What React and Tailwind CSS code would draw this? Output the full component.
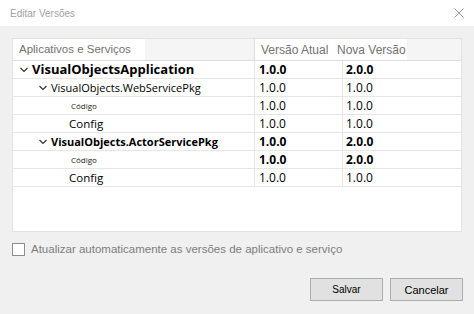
import React from "react";

const rows = [
  { label: "VisualObjectsApplication", indent: "pl-[7px]", chevron: true, size: "text-[13px] font-bold", cur: "1.0.0", next: "2.0.0", vbold: true },
  { label: "VisualObjects.WebServicePkg", indent: "pl-[26px]", chevron: true, size: "text-[11px]", cur: "1.0.0", next: "1.0.0", vbold: false },
  { label: "Código", indent: "pl-[58px]", size: "text-[8px] text-[#222]", cur: "1.0.0", next: "1.0.0", vbold: false },
  { label: "Config", indent: "pl-[56px]", size: "text-[11.5px]", cur: "1.0.0", next: "1.0.0", vbold: false },
  { label: "VisualObjects.ActorServicePkg", indent: "pl-[26px]", chevron: true, size: "text-[11px] font-bold", cur: "1.0.0", next: "2.0.0", vbold: true },
  { label: "Código", indent: "pl-[58px]", size: "text-[8px] text-[#222]", cur: "1.0.0", next: "2.0.0", vbold: true },
  { label: "Config", indent: "pl-[56px]", size: "text-[11.5px]", cur: "1.0.0", next: "1.0.0", vbold: false },
];

function Chevron() {
  return (
    <svg width="8" height="6" viewBox="0 0 8 6" className="mr-[4px] shrink-0">
      <polyline points="0.5,1 4,4.5 7.5,1" fill="none" stroke="#333" strokeWidth="1.2" />
    </svg>
  );
}

function App() {
  return (
    <div className="w-[474px] h-[314px] bg-[#f0f0f0] flex flex-col overflow-hidden font-['Open_Sans',_'Noto_Sans',sans-serif] text-[12px] text-black">
      <div className="h-[26px] bg-white flex items-center justify-between pl-[10px] pr-[10px] shrink-0">
        <span className="text-[10px] text-[#a3a3a3] font-['Liberation_Sans',_Arial,sans-serif]">Editar Versões</span>
        <svg width="10" height="10" viewBox="0 0 10 10">
          <path d="M0.5 0.5 L9.5 9.5 M9.5 0.5 L0.5 9.5" stroke="#8a8a8a" strokeWidth="0.9" />
        </svg>
      </div>

      <div className="px-[12px] pt-[12px]">
        <div className="h-[194px] bg-white border border-[#e2e2e2]">
          {/* header */}
          <div className="flex h-[22px] bg-[#f5f5f5] border-b border-[#dedede] font-['Liberation_Sans',_Arial,sans-serif] text-[12px] text-[#727272]">
            <div className="w-[241px] flex items-center text-[11.5px]">
              <span className="bg-white h-full flex items-center pl-[6px] pr-[14px]">Aplicativos e Serviços</span>
            </div>
            <div className="w-[88px] border-l border-[#dcdcdc] flex items-center bg-white pl-[6px]">
              <span>Versão Atual</span>
            </div>
            <div className="flex-1 border-l border-[#dcdcdc] flex items-center">
              <span className="bg-white h-full flex items-center ml-[-6px] pr-[1px] relative">Nova Versão</span>
            </div>
          </div>
          {rows.map((r, i) => (
            <div key={i} className="flex h-[18px] border-b border-[#e6e6e6]">
              <div className={`w-[241px] flex items-center ${r.indent}`}>
                {r.chevron && <Chevron />}
                <span className={`${r.size} leading-none`}>{r.label}</span>
              </div>
              <div className={`w-[88px] border-l border-[#e6e6e6] flex items-center pl-[4px] ${r.vbold ? "font-bold" : ""}`}>{r.cur}</div>
              <div className={`flex-1 border-l border-[#e6e6e6] flex items-center pl-[3px] ${r.vbold ? "font-bold" : ""}`}>{r.next}</div>
            </div>
          ))}
        </div>
      </div>

      <div className="flex items-center px-[12px] mt-[9px] font-['Liberation_Sans',_Arial,sans-serif] text-[11.5px] text-[#7d7d7d]">
        <div className="w-[13px] h-[13px] border border-[#8c8c8c] bg-white mr-[6px]"></div>
        <span>Atualizar automaticamente as versões de aplicativo e serviço</span>
      </div>

      <div className="flex justify-end gap-[7px] px-[11px] mt-[20px] font-['Liberation_Sans',_Arial,sans-serif]">
        <button className="w-[73px] h-[23px] bg-[#e1e1e1] border border-[#adadad] text-[10px] text-black">Salvar</button>
        <button className="w-[73px] h-[23px] bg-[#e1e1e1] border border-[#adadad] text-[11px] text-black">Cancelar</button>
      </div>
    </div>
  );
}

export default App;
